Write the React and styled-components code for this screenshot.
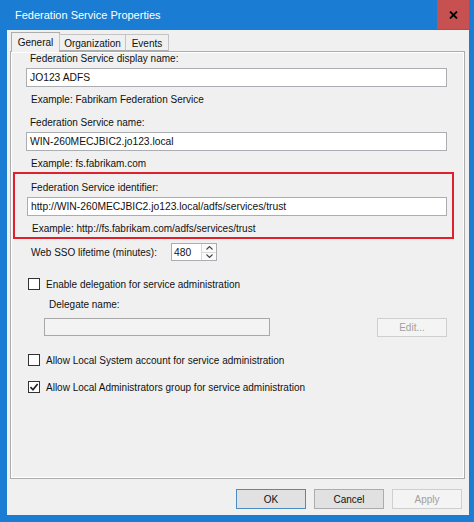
import React from 'react';
import styled, { createGlobalStyle } from 'styled-components';

const GlobalStyle = createGlobalStyle`
  html, body {
    margin: 0;
    padding: 0;
  }
  body {
    background: #1a7dd3;
    font-family: 'Liberation Sans', Arial, sans-serif;
    font-size: 10px;
    color: #111;
  }
`;

const Window = styled.div`
  width: 474px;
  height: 522px;
  box-sizing: border-box;
  background: #1a7dd3;
  padding: 0 5px 7px 7px;
  display: flex;
  flex-direction: column;
`;

const TitleBar = styled.div`
  height: 30px;
  display: flex;
  align-items: flex-start;
`;

const Title = styled.div`
  flex: 1;
  color: #fff;
  font-size: 11px;
  line-height: 30px;
  padding-left: 8px;
`;

const CloseButton = styled.div`
  width: 32px;
  height: 29px;
  background: #c75050;
  display: flex;
  align-items: center;
  justify-content: center;
`;

const Client = styled.div`
  flex: 1;
  background: #f0f0f0;
  display: flex;
  flex-direction: column;
  padding: 0 4px 6px 3px;
`;

const TabStrip = styled.div`
  height: 21px;
  display: flex;
  align-items: flex-end;
  padding-left: 1px;
  position: relative;
  z-index: 1;
`;

const Tab = styled.div`
  box-sizing: border-box;
  width: ${p => p.$width}px;
  height: ${p => (p.$active ? 20 : 17)}px;
  margin-bottom: ${p => (p.$active ? -1 : 0)}px;
  margin-left: ${p => (p.$first ? 0 : -1)}px;
  border: 1px solid ${p => (p.$active ? '#acacac' : '#c4c4c4')};
  border-bottom: ${p => (p.$active ? 'none' : '1px solid #acacac')};
  background: #f0f0f0;
  display: flex;
  align-items: center;
  justify-content: center;
  padding-top: ${p => (p.$active ? 0 : 1)}px;
  font-size: 10px;
`;

const Panel = styled.div`
  flex: 1;
  border: 1px solid #acacac;
  box-shadow: inset 1px 1px 0 #fff, inset -1px -1px 0 #fff;
  padding: 1px 17px 0 15px;
  display: flex;
  flex-direction: column;
`;

const FieldLabel = styled.div`
  line-height: 12px;
  padding-left: ${p => p.$indent ?? 4}px;
  margin-top: ${p => p.$gap || 0}px;
`;

const Hint = styled.div`
  line-height: 12px;
  padding-left: 5px;
  margin-top: 7px;
`;

const TextBox = styled.div`
  box-sizing: border-box;
  height: 19px;
  margin-top: 3px;
  background: #fff;
  border: 1px solid #abadb3;
  padding: 0 3px;
  display: flex;
  align-items: center;
  font-size: 10.3px;
  white-space: nowrap;
`;

const Highlight = styled.div`
  border: 2px solid #e0202a;
  margin: 2px -7px 0 -13px;
  padding: 8px 5px 2px 12px;
  display: flex;
  flex-direction: column;
`;

const SpinRow = styled.div`
  margin-top: 4px;
  padding-left: 5px;
  display: flex;
  align-items: center;
`;

const SpinLabel = styled.div`
  width: 140px;
  padding-top: 1px;
`;

const Spinner = styled.div`
  box-sizing: border-box;
  width: 46px;
  height: 18px;
  background: #fff;
  border: 1px solid #abadb3;
  display: flex;
`;

const SpinValue = styled.div`
  flex: 1;
  padding-left: 2px;
  display: flex;
  align-items: center;
  font-size: 10.3px;
`;

const SpinArrows = styled.div`
  width: 14px;
  display: flex;
  flex-direction: column;
  border-left: 1px solid #d9d9d9;
`;

const SpinArrow = styled.div`
  flex: 1;
  display: flex;
  align-items: center;
  justify-content: center;
  border-bottom: ${p => (p.$top ? '1px solid #d9d9d9' : 'none')};
  background: #fafafa;
`;

const CheckRow = styled.label`
  margin-top: ${p => p.$gap}px;
  padding-left: 2px;
  height: 14px;
  display: flex;
  align-items: center;
  gap: 6px;
`;

const Box = styled.span`
  box-sizing: border-box;
  width: 12px;
  height: 12px;
  border: 1px solid #333;
  background: #fff;
  display: flex;
  align-items: center;
  justify-content: center;
`;

const DelegateRow = styled.div`
  margin-top: 7px;
  padding-left: 18px;
  display: flex;
  align-items: flex-start;
`;

const DisabledBox = styled.div`
  box-sizing: border-box;
  width: 226px;
  height: 18px;
  background: #f3f3f3;
  border: 1px solid #a8a8a8;
`;

const Button = styled.div`
  box-sizing: border-box;
  width: 70px;
  height: ${p => p.$height || 20}px;
  display: flex;
  align-items: center;
  justify-content: center;
  font-size: 10px;
  border: 1px solid
    ${p => (p.$disabled ? '#cfcfcf' : p.$default ? '#4a8cc6' : '#acacac')};
  background: ${p => (p.$disabled ? '#f4f4f4' : '#e1e1e1')};
  color: ${p => (p.$disabled ? '#a0a0a0' : '#111')};
  margin-left: ${p => (p.$push ? 'auto' : '0')};
`;

const ButtonRow = styled.div`
  margin-top: 10px;
  padding-right: 3px;
  display: flex;
  justify-content: flex-end;
  gap: 8px;
`;

const Check = ({ checked }) => (
  <Box>
    {checked && (
      <svg width="10" height="10" viewBox="0 0 10 10">
        <path d="M1.5 5.2 L4 7.8 L8.6 2" fill="none" stroke="#222" strokeWidth="1.7" />
      </svg>
    )}
  </Box>
);

const Chevron = ({ up }) => (
  <svg width="7" height="4" viewBox="0 0 7 4">
    <path
      d={up ? 'M0.5 3.5 L3.5 0.5 L6.5 3.5' : 'M0.5 0.5 L3.5 3.5 L6.5 0.5'}
      fill="none"
      stroke="#444"
      strokeWidth="1.1"
    />
  </svg>
);

const Field = ({ label, value, hint, gap }) => (
  <>
    <FieldLabel $gap={gap}>{label}</FieldLabel>
    <TextBox>{value}</TextBox>
    <Hint>{hint}</Hint>
  </>
);

export default function App() {
  return (
    <Window>
      <GlobalStyle />
      <TitleBar>
        <Title>Federation Service Properties</Title>
        <CloseButton>
          <svg width="9" height="8" viewBox="0 0 9 8">
            <path d="M1 0.5 L8 7.5 M8 0.5 L1 7.5" stroke="#000" strokeWidth="1.8" />
          </svg>
        </CloseButton>
      </TitleBar>
      <Client>
        <TabStrip>
          <Tab $active $first $width={49}>General</Tab>
          <Tab $width={67}>Organization</Tab>
          <Tab $width={44}>Events</Tab>
        </TabStrip>
        <Panel>
          <Field
            label="Federation Service display name:"
            value="JO123 ADFS"
            hint="Example: Fabrikam Federation Service"
          />
          <Field
            gap={11}
            label="Federation Service name:"
            value="WIN-260MECJBIC2.jo123.local"
            hint="Example: fs.fabrikam.com"
          />
          <Highlight>
            <Field
              label="Federation Service identifier:"
              value="http://WIN-260MECJBIC2.jo123.local/adfs/services/trust"
              hint="Example: http://fs.fabrikam.com/adfs/services/trust"
            />
          </Highlight>
          <SpinRow>
            <SpinLabel>Web SSO lifetime (minutes):</SpinLabel>
            <Spinner>
              <SpinValue>480</SpinValue>
              <SpinArrows>
                <SpinArrow $top>
                  <Chevron up />
                </SpinArrow>
                <SpinArrow>
                  <Chevron />
                </SpinArrow>
              </SpinArrows>
            </Spinner>
          </SpinRow>
          <CheckRow $gap={16}>
            <Check />
            Enable delegation for service administration
          </CheckRow>
          <FieldLabel $gap={8} $indent={23}>Delegate name:</FieldLabel>
          <DelegateRow>
            <DisabledBox />
            <Button $disabled $push $height={19}>Edit...</Button>
          </DelegateRow>
          <CheckRow $gap={16}>
            <Check />
            Allow Local System account for service administration
          </CheckRow>
          <CheckRow $gap={13}>
            <Check checked />
            Allow Local Administrators group for service administration
          </CheckRow>
        </Panel>
        <ButtonRow>
          <Button $default>OK</Button>
          <Button>Cancel</Button>
          <Button $disabled>Apply</Button>
        </ButtonRow>
      </Client>
    </Window>
  );
}
